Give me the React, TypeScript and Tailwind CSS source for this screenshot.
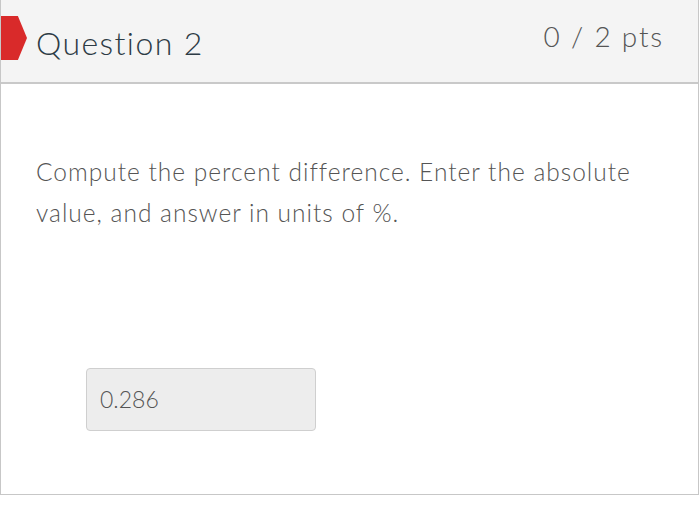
import React from "react";

export default function App() {
  return (
    <div className="w-[700px] h-[510px] bg-white font-['Lato','Liberation_Sans',sans-serif]">
      <div className="relative w-[699px] border-x border-b border-[#c7c7c7]">
        {/* Marker */}
        <div className="absolute left-0 top-[16px] w-[26px] h-[44px] bg-[#d92a2a] [clip-path:polygon(0_0,65%_0,100%_50%,65%_100%,0_100%)]" />

        {/* Header */}
        <div className="flex h-[84px] items-start justify-between bg-[#f4f4f4] border-b-2 border-[#c9c9c9] pl-[35px] pr-[34px]">
          <h2 className="mt-[22px] text-[32px] font-light tracking-[1.4px] leading-[42px] text-[#2d3b45]">Question 2</h2>
          <span className="mt-[17px] text-[28px] font-light tracking-[1.8px] leading-[38px] text-[#555]">0 / 2 pts</span>
        </div>

        {/* Body */}
        <div className="h-[410px] pl-[35px] pr-[30px] pt-[67px]">
          <p className="text-[24.5px] font-light tracking-[1px] leading-[41px] text-[#555]">
            Compute the percent difference. Enter the absolute value, and answer in units of %.
          </p>
          <div className="mt-[135px] ml-[50px] flex h-[63px] w-[230px] items-center rounded-[4px] border border-[#cfcfcf] bg-[#ededed] px-[13px] text-[23px] font-light text-[#555]">
            0.286
          </div>
        </div>
      </div>
    </div>
  );
}
